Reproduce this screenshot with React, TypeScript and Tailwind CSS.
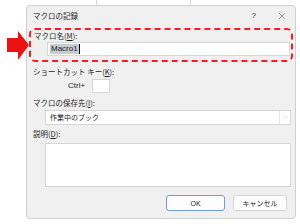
import React from 'react';
import { X, ChevronDown } from 'lucide-react';

const font = { fontFamily: '"Noto Sans CJK JP", "Liberation Sans", sans-serif' };
const latin = { fontFamily: '"Liberation Sans", sans-serif' };

const App: React.FC = () => {
    return (
        <div className="relative w-[300px] h-[224px] bg-white overflow-hidden" style={font}>
            {/* faint sheet lines behind dialog */}
            <div className="absolute left-[96px] top-0 w-px h-[5px] bg-[#d8d8d8]" />
            <div className="absolute left-[190px] top-0 w-px h-[5px] bg-[#d8d8d8]" />

            <div className="absolute left-[26px] top-[5px] w-[270px] h-[214px] bg-[#f0f0f0] border border-[#cfcfcf] rounded-[4px] flex flex-col text-[#1b1b1b]">
                {/* title bar */}
                <div className="h-[19px] flex items-center pl-[6px] pr-[8px]">
                    <span className="text-[7.5px] leading-none">マクロの記録</span>
                    <span className="ml-auto text-[8px] leading-none mr-[21px]" style={latin}>?</span>
                    <X size={10} strokeWidth={1.2} className="text-[#333]" />
                </div>

                {/* highlighted macro name */}
                <div className="mt-[3px] mx-[2px] h-[34px] border-2 border-dashed border-[#ff1a1a] rounded-[6px] flex flex-col pl-[3px] pr-[1px]">
                    <div className="text-[7.5px] leading-[10px] mt-[1px]">
                        マクロ名(<span className="underline">M</span>):
                    </div>
                    <div className="ml-[13px] mt-[1px] h-[14px] bg-white border border-[#d6d6d6] flex items-center pl-[2px]">
                        <span className="bg-[#c6ccd2] text-[8px] leading-[10px] px-[1px]" style={latin}>Macro1</span>
                        <span className="w-px h-[10px] bg-black" />
                    </div>
                </div>

                <div className="pl-[6px] pr-[4px] flex flex-col">
                    <div className="text-[7.5px] leading-[10px] mt-[5px]">
                        ショートカット キー(<span className="underline">K</span>):
                    </div>
                    <div className="flex items-center mt-[2px]">
                        <span className="ml-[35px] text-[8px] leading-none w-[24px]" style={latin}>Ctrl+</span>
                        <div className="w-[18px] h-[14px] bg-white border border-[#d6d6d6]" />
                    </div>
                    <div className="text-[7.5px] leading-[10px] mt-[5px]">
                        マクロの保存先(<span className="underline">I</span>):
                    </div>
                    <div className="ml-[12px] mt-[2px] h-[15px] bg-white border border-[#d6d6d6] flex items-center">
                        <span className="pl-[4px] text-[7px] leading-none">作業中のブック</span>
                        <div className="ml-auto h-full w-[11px] border-l border-[#e6e6e6] flex items-center justify-center">
                            <ChevronDown size={7} strokeWidth={1.2} className="text-[#999]" />
                        </div>
                    </div>
                    <div className="text-[7.5px] leading-[10px] mt-[4px]">
                        説明(<span className="underline">D</span>):
                    </div>
                    <div className="ml-[12px] mt-[4px] h-[44px] bg-white border border-[#d6d6d6]" />
                    <div className="flex justify-end mt-[8px] gap-[8px] pr-[4px]">
                        <button className="w-[59px] h-[16px] bg-[#fdfdfd] border border-[#6d9fd6] rounded-[3px] text-[7px] leading-none" style={latin}>OK</button>
                        <button className="w-[54px] h-[16px] bg-[#fdfdfd] border border-[#d4d4d4] rounded-[3px] text-[7px] leading-none">キャンセル</button>
                    </div>
                </div>
            </div>

            {/* red arrow */}
            <svg className="absolute left-[7px] top-[31px]" width="22" height="30" viewBox="0 0 22 30">
                <polygon points="0,7 11,7 11,0 22,14 11,29 11,21 0,21" fill="#ee1111" />
            </svg>
        </div>
    );
};

export default App;
